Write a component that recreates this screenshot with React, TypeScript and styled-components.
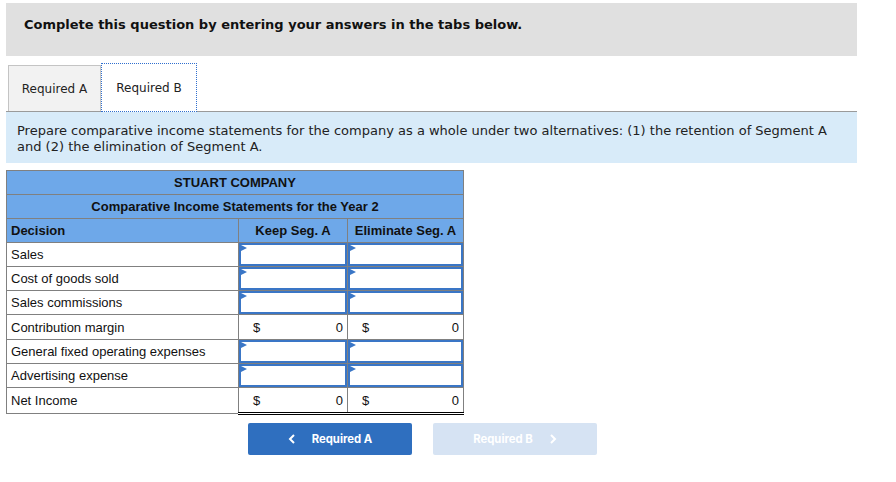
import React from "react";
import styled, { createGlobalStyle } from "styled-components";

const Global = createGlobalStyle`
  body { margin: 0; background: #fff; font-family: "DejaVu Sans", Verdana, sans-serif; }
`;

const Page = styled.div`
  width: 851px;
  margin-left: 6px;
  padding-top: 3px;
`;

const Banner = styled.div`
  height: 53px;
  box-sizing: border-box;
  background: #e0e0e0;
  padding: 14px 0 0 18px;
  font-weight: bold;
  font-size: 13px;
  color: #111;
`;

const TabBar = styled.div`
  display: flex;
  align-items: flex-end;
  margin-top: 7px;
  padding-left: 2px;
  height: 48px;
  border-bottom: 1px solid #9a9a9a;
`;

const Tab = styled.div<{ $active?: boolean }>`
  box-sizing: border-box;
  display: flex;
  align-items: center;
  justify-content: center;
  font-size: 12px;
  color: #222;
  ${(p) =>
    p.$active
      ? `width: 96px; height: 49px; background: #fff; border: 1px dotted #2f6fcf; margin-bottom: -1px; padding-top: 1px;`
      : `width: 93px; height: 46px; background: #f2f2f2; border: 1px solid #c4c4c4; border-bottom: none;`}
`;

const Info = styled.div`
  background: #d8ebf9;
  height: 51px;
  box-sizing: border-box;
  padding: 11px 11px 0 11px;
  font-size: 13px;
  line-height: 16px;
  color: #222;
`;

const Table = styled.table`
  margin-top: 7px;
  border-collapse: collapse;
  width: 457px;
  font-family: "Liberation Sans", Arial, sans-serif;
  font-size: 13px;
  color: #111;
  table-layout: fixed;
`;

const HeadCell = styled.td<{ $align?: string }>`
  background: #6ea8e9;
  border: 1px solid #808080;
  height: 23px;
  padding: 0 4px;
  font-weight: bold;
  text-align: ${(p) => p.$align || "center"};
`;

const LabelCell = styled.td`
  border: 1px solid #808080;
  height: 23px;
  padding: 0 4px;
  white-space: nowrap;
`;

const InputCell = styled.td`
  border: 1px solid #808080;
  padding: 0;
  height: 23px;
`;

const InputBox = styled.div`
  position: relative;
  height: 23px;
  box-sizing: border-box;
  border: 2px solid #3a76c6;
  background: #fff;
  &::before {
    content: "";
    position: absolute;
    left: 0;
    top: 0;
    border-left: 6px solid #3a76c6;
    border-top: 3px solid transparent;
    border-bottom: 3px solid transparent;
  }
`;

const TotalCell = styled.td<{ $double?: boolean }>`
  border: 1px solid #808080;
  border-top: 1px solid #000;
  ${(p) => (p.$double ? "border-bottom: 3px double #000;" : "")}
  height: 24px;
  padding: 0 4px 0 14px;
`;

const TotalInner = styled.div`
  display: flex;
  justify-content: space-between;
`;

const Buttons = styled.div`
  display: flex;
  gap: 21px;
  margin: 8px 0 0 242px;
`;

const NavButton = styled.div<{ $disabled?: boolean }>`
  width: 164px;
  height: 32px;
  border-radius: 2px;
  display: flex;
  align-items: center;
  justify-content: center;
  gap: 16px;
  font-family: Inter, "Liberation Sans", sans-serif;
  font-weight: 700;
  font-size: 11.3px;
  color: #fff;
  background: ${(p) => (p.$disabled ? "#d6e3f3" : "#2f6fbf")};
`;

const Chevron = ({ dir }: { dir: "left" | "right" }) => (
  <svg width="8" height="10" viewBox="0 0 8 10">
    <path
      d={dir === "left" ? "M6 1 L2 5 L6 9" : "M2 1 L6 5 L2 9"}
      fill="none"
      stroke="#fff"
      strokeWidth="2"
    />
  </svg>
);

type Row = { label: string; kind: "input" | "total" | "net" };
const rows: Row[] = [
  { label: "Sales", kind: "input" },
  { label: "Cost of goods sold", kind: "input" },
  { label: "Sales commissions", kind: "input" },
  { label: "Contribution margin", kind: "total" },
  { label: "General fixed operating expenses", kind: "input" },
  { label: "Advertising expense", kind: "input" },
  { label: "Net Income", kind: "net" },
];

export default function App() {
  return (
    <Page>
      <Global />
      <Banner>Complete this question by entering your answers in the tabs below.</Banner>
      <TabBar>
        <Tab>Required A</Tab>
        <Tab $active>Required B</Tab>
      </TabBar>
      <Info>
        Prepare comparative income statements for the company as a whole under two alternatives: (1) the retention of Segment A
        and (2) the elimination of Segment A.
      </Info>
      <Table>
        <colgroup>
          <col style={{ width: 232 }} />
          <col style={{ width: 109 }} />
          <col style={{ width: 116 }} />
        </colgroup>
        <tbody>
          <tr>
            <HeadCell colSpan={3}>STUART COMPANY</HeadCell>
          </tr>
          <tr>
            <HeadCell colSpan={3}>Comparative Income Statements for the Year 2</HeadCell>
          </tr>
          <tr>
            <HeadCell $align="left">Decision</HeadCell>
            <HeadCell>Keep Seg. A</HeadCell>
            <HeadCell>Eliminate Seg. A</HeadCell>
          </tr>
          {rows.map((r) => (
            <tr key={r.label}>
              <LabelCell>{r.label}</LabelCell>
              {r.kind === "input" ? (
                <>
                  <InputCell>
                    <InputBox />
                  </InputCell>
                  <InputCell>
                    <InputBox />
                  </InputCell>
                </>
              ) : (
                <>
                  <TotalCell $double={r.kind === "net"}>
                    <TotalInner>
                      <span>$</span>
                      <span>0</span>
                    </TotalInner>
                  </TotalCell>
                  <TotalCell $double={r.kind === "net"}>
                    <TotalInner>
                      <span>$</span>
                      <span>0</span>
                    </TotalInner>
                  </TotalCell>
                </>
              )}
            </tr>
          ))}
        </tbody>
      </Table>
      <Buttons>
        <NavButton>
          <Chevron dir="left" />
          <span>Required A</span>
        </NavButton>
        <NavButton $disabled>
          <span>Required B</span>
          <Chevron dir="right" />
        </NavButton>
      </Buttons>
    </Page>
  );
}
